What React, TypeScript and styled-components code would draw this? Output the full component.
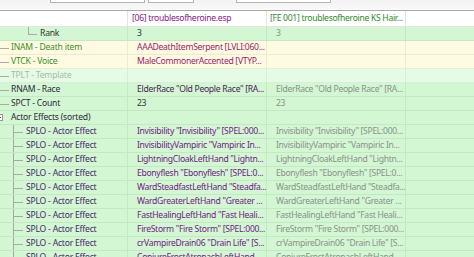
import React from "react";
import styled, { createGlobalStyle } from "styled-components";

const GlobalStyle = createGlobalStyle`
  html, body {
    margin: 0;
    padding: 0;
    background: #ffffff;
    overflow: hidden;
  }
  body {
    font-family: "Noto Sans", "Open Sans", sans-serif;
    font-size: 8.6px;
    letter-spacing: -0.22px;
  }
`;

type RowKind = "green" | "yellow" | "pale";
type Tree = "rank" | "leaf" | "group" | "child";

type Row = {
  kind: RowKind;
  tree: Tree;
  label: string;
  labelColor: string;
  value: string;
  valueColor: string;
  other: string;
};

const SPLO = (value: string, other: string): Row => ({
  kind: "green",
  tree: "child",
  label: "SPLO - Actor Effect",
  labelColor: "#45286a",
  value,
  valueColor: "#6e2285",
  other,
});

const ROWS: Row[] = [
  { kind: "green", tree: "rank", label: "Rank", labelColor: "#333333", value: "3", valueColor: "#333333", other: "3" },
  { kind: "yellow", tree: "leaf", label: "INAM - Death item", labelColor: "#3b8f1e", value: "AAADeathItemSerpent [LVLI:060...", valueColor: "#9a2468", other: "" },
  { kind: "yellow", tree: "leaf", label: "VTCK - Voice", labelColor: "#3b8f1e", value: "MaleCommonerAccented [VTYP...", valueColor: "#9a2468", other: "" },
  { kind: "pale", tree: "leaf", label: "TPLT - Template", labelColor: "#aab8aa", value: "", valueColor: "#333333", other: "" },
  { kind: "green", tree: "leaf", label: "RNAM - Race", labelColor: "#2d2a3a", value: "ElderRace \"Old People Race\" [RA...", valueColor: "#4a2258", other: "ElderRace \"Old People Race\" [RA..." },
  { kind: "green", tree: "leaf", label: "SPCT - Count", labelColor: "#2d2a3a", value: "23", valueColor: "#333333", other: "23" },
  { kind: "green", tree: "group", label: "Actor Effects (sorted)", labelColor: "#2d2a3a", value: "", valueColor: "#333333", other: "" },
  SPLO("Invisibility \"Invisibility\" [SPEL:000...", "Invisibility \"Invisibility\" [SPEL:000..."),
  SPLO("InvisibilityVampiric \"Vampiric In...", "InvisibilityVampiric \"Vampiric In..."),
  SPLO("LightningCloakLeftHand \"Lightn...", "LightningCloakLeftHand \"Lightn..."),
  SPLO("Ebonyflesh \"Ebonyflesh\" [SPEL:0...", "Ebonyflesh \"Ebonyflesh\" [SPEL:0..."),
  SPLO("WardSteadfastLeftHand \"Steadfa...", "WardSteadfastLeftHand \"Steadfa..."),
  SPLO("WardGreaterLeftHand \"Greater ...", "WardGreaterLeftHand \"Greater ..."),
  SPLO("FastHealingLeftHand \"Fast Heali...", "FastHealingLeftHand \"Fast Heali..."),
  SPLO("FireStorm \"Fire Storm\" [SPEL:000...", "FireStorm \"Fire Storm\" [SPEL:000..."),
  SPLO("crVampireDrain06 \"Drain Life\" [S...", "crVampireDrain06 \"Drain Life\" [S..."),
  SPLO("ConjureFrostAtronachLeftHand...", "ConjureFrostAtronachLeftHand..."),
];

const ROW_BG: Record<RowKind, string> = {
  green: "#d3f6d3",
  yellow: "#fffbe3",
  pale: "#e6fbe6",
};

const ROW_LINE: Record<RowKind, string> = {
  green: "#c4e8c4",
  yellow: "#efe9cf",
  pale: "#d6efd6",
};

const Window = styled.div`
  width: 474px;
  height: 257px;
  overflow: hidden;
  display: flex;
  flex-direction: column;
  background: #ffffff;
`;

const Toolbar = styled.div`
  height: 10px;
  flex: none;
  display: flex;
  align-items: flex-start;
  background: linear-gradient(#f3f3f3, #f9f9f9);
  border-bottom: 1px solid #a9a9a9;
`;

const ToolField = styled.div<{ $left: number; $width: number }>`
  margin-left: ${({ $left }) => $left}px;
  width: ${({ $width }) => $width}px;
  height: 2px;
  background: #ffffff;
  border: 1px solid #b4b4b4;
  border-top: none;
`;

const GridRow = styled.div<{ $bg: string; $line: string; $h: number }>`
  display: grid;
  grid-template-columns: 128px 139px 139px 1fr;
  height: ${({ $h }) => $h}px;
  flex: none;
  background: ${({ $bg }) => $bg};
  border-bottom: 1px solid ${({ $line }) => $line};
  box-sizing: border-box;
`;

const Cell = styled.div<{ $color?: string; $pad: number; $line: string }>`
  position: relative;
  display: flex;
  align-items: center;
  padding-left: ${({ $pad }) => $pad}px;
  border-right: 1px solid ${({ $line }) => $line};
  color: ${({ $color }) => $color ?? "#333333"};
  white-space: nowrap;
  overflow: hidden;
  line-height: 1;
`;

const ValueCell = styled(Cell)`
  letter-spacing: -0.3px;
`;

const HeaderCell = styled(Cell)`
  letter-spacing: -0.3px;
`;

const Connector = styled.span<{ $x: number; $w: number }>`
  position: absolute;
  left: ${({ $x }) => $x}px;
  width: ${({ $w }) => $w}px;
  top: 50%;
  border-top: 1px solid #a8a8a8;
`;

const VLine = styled.span<{ $x: number; $top: string; $bottom: string }>`
  position: absolute;
  left: ${({ $x }) => $x}px;
  top: ${({ $top }) => $top};
  bottom: ${({ $bottom }) => $bottom};
  border-left: 1px solid #a8a8a8;
`;

const Expander = styled.span`
  position: absolute;
  left: -4px;
  top: 50%;
  margin-top: -4px;
  width: 7px;
  height: 7px;
  box-sizing: border-box;
  border: 1px solid #9a9a9a;
  background: #ffffff;
  &::after {
    content: "";
    position: absolute;
    left: 1px;
    right: 1px;
    top: 2px;
    border-top: 1px solid #555555;
  }
`;

const LABEL_PAD: Record<Tree, number> = {
  rank: 40,
  leaf: 11,
  group: 11,
  child: 26,
};

function TreeLines({ tree }: { tree: Tree }) {
  if (tree === "rank") {
    return (
      <>
        <VLine $x={28} $top="-2px" $bottom="50%" />
        <Connector $x={28} $w={9} />
      </>
    );
  }
  if (tree === "leaf") return <Connector $x={0} $w={9} />;
  if (tree === "group") return <Expander />;
  return (
    <>
      <VLine $x={13} $top="-1px" $bottom="-1px" />
      <Connector $x={13} $w={10} />
    </>
  );
}

function DataRow({ row }: { row: Row }) {
  const line = ROW_LINE[row.kind];
  return (
    <GridRow $bg={ROW_BG[row.kind]} $line={line} $h={14}>
      <Cell $pad={LABEL_PAD[row.tree]} $color={row.labelColor} $line={line}>
        <TreeLines tree={row.tree} />
        {row.label}
      </Cell>
      <ValueCell $pad={9} $color={row.valueColor} $line={line}>
        {row.value}
      </ValueCell>
      <ValueCell $pad={9} $color="#8a928a" $line={line}>
        {row.other}
      </ValueCell>
      <Cell $pad={0} $line="transparent" />
    </GridRow>
  );
}

export default function App() {
  return (
    <Window>
      <GlobalStyle />
      <Toolbar>
        <ToolField $left={50} $width={93} />
        <ToolField $left={3} $width={44} />
        <ToolField $left={42} $width={93} />
      </Toolbar>
      <GridRow $bg="#ffffff" $line="#e3e3e3" $h={16}>
        <HeaderCell $pad={0} $line="#e3e3e3" />
        <HeaderCell $pad={4} $color="#86217f" $line="#e3e3e3">
          [06] troublesofheroine.esp
        </HeaderCell>
        <HeaderCell $pad={3} $color="#2f8a2f" $line="#e3e3e3">
          [FE 001] troublesofheroine KS Hair...
        </HeaderCell>
        <HeaderCell $pad={0} $line="transparent" />
      </GridRow>
      {ROWS.map((row, i) => (
        <DataRow key={i} row={row} />
      ))}
    </Window>
  );
}
